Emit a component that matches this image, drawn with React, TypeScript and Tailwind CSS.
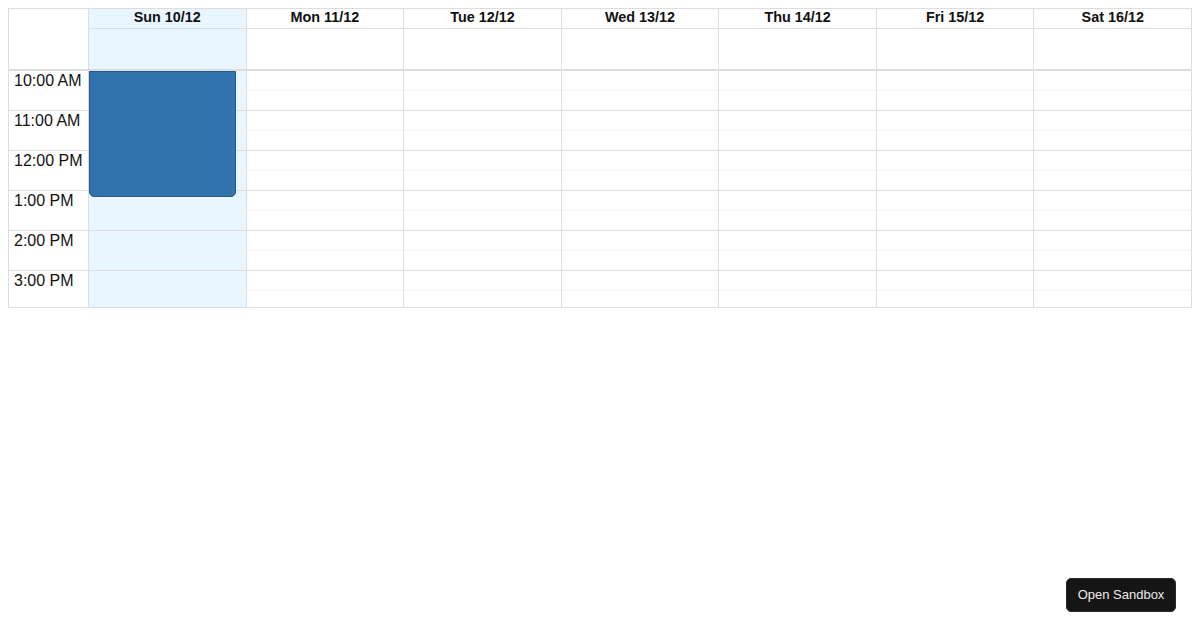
const days = ["Sun 10/12", "Mon 11/12", "Tue 12/12", "Wed 13/12", "Thu 14/12", "Fri 15/12", "Sat 16/12"];
const hours = ["10:00 AM", "11:00 AM", "12:00 PM", "1:00 PM", "2:00 PM", "3:00 PM"];

function DayColumn({ today, children }: { today?: boolean; children?: React.ReactNode }) {
  return (
    <div className={`relative flex-1 border-l border-[#ddd] ${today ? "bg-[#eaf6ff]" : ""}`}>
      {hours.map((h) => (
        <div key={h} className="h-[40px] border-b border-[#ddd]">
          <div className="h-[20px] border-b border-[#f5f5f5]" />
        </div>
      ))}
      {children}
    </div>
  );
}

export default function App() {
  return (
    <div className="min-h-screen bg-white font-['Liberation_Sans',Arial,sans-serif] text-[#111]">
      <div className="m-2 flex flex-col border border-[#ddd]">
        {/* header */}
        <div className="flex">
          <div className="w-[79px] shrink-0" />
          {days.map((d, i) => (
            <div key={d} className={`flex-1 border-l border-[#ddd] ${i === 0 ? "bg-[#eaf6ff]" : ""}`}>
              <div className="h-[20px] border-b border-[#ddd] text-center text-[14.4px] font-bold leading-[17px]">{d}</div>
              <div className="h-[40px]" />
            </div>
          ))}
        </div>

        {/* time grid */}
        <div className="flex h-[238px] overflow-hidden border-t-2 border-[#ddd]">
          <div className="w-[79px] shrink-0">
            {hours.map((h) => (
              <div key={h} className="h-[40px] border-b border-[#ddd] px-[5px] text-[16px] leading-[20px]">
                {h}
              </div>
            ))}
          </div>
          <DayColumn today>
            <div className="absolute left-0 top-0 h-[126px] right-[10px] rounded-b-[5px] border border-[#265985] bg-[#3174ad]" />
          </DayColumn>
          {days.slice(1).map((d) => (
            <DayColumn key={d} />
          ))}
        </div>
      </div>

      <button className="fixed bottom-[18px] right-[24px] flex h-[34px] w-[110px] items-center justify-center rounded-[5px] border border-[#2a2a2a] bg-[#151515] text-[13px] text-[#ececec]">
        Open Sandbox
      </button>
    </div>
  );
}
